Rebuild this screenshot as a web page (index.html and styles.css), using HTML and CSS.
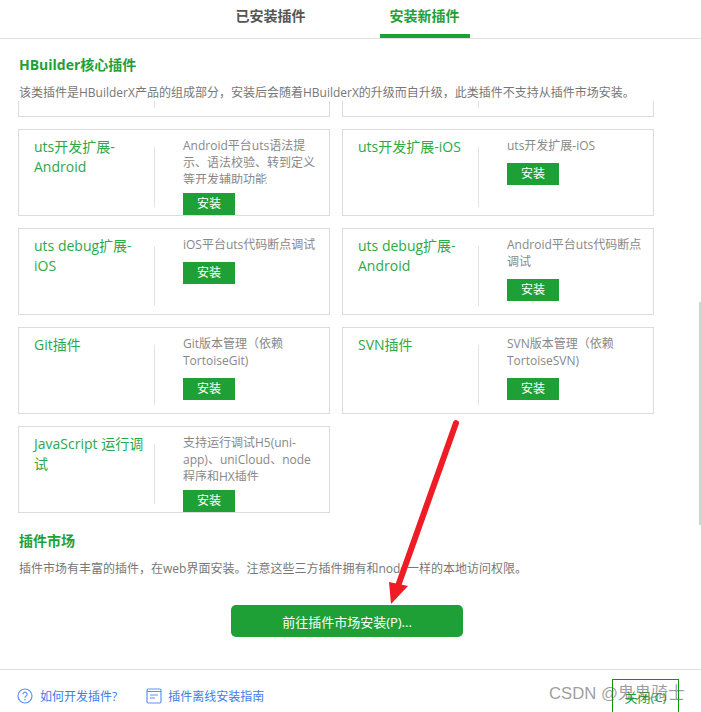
FILE: index.html
```html
<!DOCTYPE html>
<html lang="zh">
<head>
<meta charset="utf-8">
<title>插件安装</title>
<link rel="stylesheet" href="styles.css">
</head>
<body>
<div class="app">
  <nav class="tabs">
    <div class="tab">已安装插件</div>
    <div class="tab active">安装新插件</div>
  </nav>
  <main class="content">
    <h2 class="heading">HBuilder核心插件</h2>
    <p class="desc">该类插件是HBuilderX产品的组成部分，安装后会随着HBuilderX的升级而自升级，此类插件不支持从插件市场安装。</p>
    <div class="list">
      <div class="grid">
        <div class="card stub"><div class="rule"></div></div>
        <div class="card stub"><div class="rule"></div></div>
        <div class="card">
          <div class="name">uts开发扩展-Android</div><div class="rule"></div>
          <div class="info"><p>Android平台uts语法提示、语法校验、转到定义等开发辅助功能</p><button class="install">安装</button></div>
        </div>
        <div class="card">
          <div class="name">uts开发扩展-iOS</div><div class="rule"></div>
          <div class="info"><p>uts开发扩展-iOS</p><button class="install">安装</button></div>
        </div>
        <div class="card">
          <div class="name">uts debug扩展-iOS</div><div class="rule"></div>
          <div class="info"><p>iOS平台uts代码断点调试</p><button class="install">安装</button></div>
        </div>
        <div class="card">
          <div class="name">uts debug扩展-Android</div><div class="rule"></div>
          <div class="info"><p>Android平台uts代码断点调试</p><button class="install">安装</button></div>
        </div>
        <div class="card">
          <div class="name">Git插件</div><div class="rule"></div>
          <div class="info"><p>Git版本管理（依赖TortoiseGit)</p><button class="install">安装</button></div>
        </div>
        <div class="card">
          <div class="name">SVN插件</div><div class="rule"></div>
          <div class="info"><p>SVN版本管理（依赖TortoiseSVN)</p><button class="install">安装</button></div>
        </div>
        <div class="card">
          <div class="name">JavaScript 运行调试</div><div class="rule"></div>
          <div class="info"><p>支持运行调试H5(uni-app)、uniCloud、node程序和HX插件</p><button class="install">安装</button></div>
        </div>
      </div>
    </div>
    <h2 class="heading market">插件市场</h2>
    <p class="desc">插件市场有丰富的插件，在web界面安装。注意这些三方插件拥有和node一样的本地访问权限。</p>
    <div class="cta"><button class="go">前往插件市场安装(P)...</button></div>
  </main>
  <footer class="footer">
    <a class="link">
      <svg class="icon" viewBox="0 0 16 16" width="16" height="16"><circle cx="8" cy="8" r="7" fill="none" stroke="#5b93f5" stroke-width="1.2"/><path d="M5.9 6.3a2.1 2.1 0 1 1 3.2 1.8c-.7.4-1.1.8-1.1 1.7" fill="none" stroke="#5b93f5" stroke-width="1.2"/><circle cx="8" cy="11.7" r=".8" fill="#5b93f5"/></svg>
      如何开发插件?
    </a>
    <a class="link second">
      <svg class="icon" viewBox="0 0 16 16" width="16" height="16"><rect x="1" y="1" width="14" height="14" rx="1.5" fill="none" stroke="#5b93f5" stroke-width="1.2"/><path d="M1 3.5h14M4 7h8M4 10h5" fill="none" stroke="#5b93f5" stroke-width="1.2"/></svg>
      插件离线安装指南
    </a>
    <button class="close">关闭(C)</button>
  </footer>
  <div class="scrollbar"></div>
  <svg class="arrow" width="80" height="200" viewBox="0 0 80 200"><path d="M71 9 13 172" stroke="#ee1c25" stroke-width="6" stroke-linecap="round" fill="none"/><path d="M6 190 4 168 23 172Z" fill="#ee1c25"/></svg>
  <div class="watermark">CSDN @鬼鬼骑士</div>
</div>
</body>
</html>
```
FILE: styles.css
```css
* { box-sizing: border-box; }
html, body { margin: 0; height: 100%; background: #fff; }
body { font-family: "Open Sans", "Noto Sans CJK SC", sans-serif; overflow: hidden; }
.app { position: relative; width: 701px; height: 712px; overflow: hidden; display: flex; flex-direction: column; }
.tabs { height: 39px; flex: none; display: flex; justify-content: center; padding-right: 6px; border-bottom: 1px solid #e0e0e0; }
.tab { width: 90px; margin: 0 32px; height: 38px; font-size: 14px; font-weight: 700; line-height: 32px; text-align: center; color: #555; }
.tab.active { color: #1fa037; border-bottom: 4px solid #1fa037; }
.content { flex: 1; padding: 0 18px; min-height: 0; }
.heading { margin: 16px 0 0 1px; font-size: 14px; line-height: 20px; font-weight: 700; color: #1fa037; }
.heading.market { margin-top: 0; }
.desc { margin: 9px 0 0 1px; font-size: 12px; line-height: 18px; color: #777; white-space: nowrap; height: 18px; }
.list { height: 430px; overflow: hidden; margin-top: -1px; }
.grid { display: grid; grid-template-columns: 312px 312px; column-gap: 12px; row-gap: 12px; }
.card { height: 87px; border: 1px solid #dcdcdc; display: flex; overflow: hidden; }
.stub { height: 16px; border-top: 0; }
.name { width: 120px; flex: none; margin-left: 15px; padding-top: 7px; padding-right: 5px; font-size: 14px; line-height: 20px; color: #2da84a; overflow-wrap: anywhere; }
.rule { width: 1px; height: 60px; flex: none; background: #e2e2e2; margin-top: 17px; }
.stub .rule { margin-top: 0; height: 7px; margin-left: 135px; }
.info { margin-left: 28px; width: 138px; height: 85px; padding-top: 7px; display: flex; flex-direction: column; font-size: 12px; color: #888; }
.info p { margin: 0; line-height: 17px; overflow: hidden; min-height: 0; overflow-wrap: anywhere; }
.install { flex: none; display: block; margin-top: 9px; width: 52px; height: 22px; padding: 0; border: 0; background: #1fa037; color: #fff; font: inherit; font-size: 12px; line-height: 22px; }
.cta { display: flex; justify-content: center; margin-top: 27px; margin-left: -7px; }
.go { width: 232px; height: 32px; border: 0; border-radius: 5px; background: #1fa037; color: #fff; font: inherit; font-size: 13px; }
.footer { flex: none; height: 43px; border-top: 1px solid #e0e0e0; display: flex; align-items: center; padding-left: 17px; }
.link { display: flex; align-items: center; gap: 7px; margin-top: 10px; font-size: 12px; color: #3d7bee; }
.second { margin-left: 29px; gap: 6px; }
.icon { flex: none; }
.close { margin-left: auto; margin-right: 22px; width: 67px; height: 34px; margin-top: 10px; padding: 0; border: 1px solid #0c960c; border-bottom: 0; background: #fff; color: #1fa037; font: inherit; font-size: 13px; }
.scrollbar { position: absolute; right: 0; top: 302px; width: 2px; height: 223px; background: #c8dacd; }
.arrow { position: absolute; left: 385px; top: 414px; }
.watermark { position: absolute; left: 549px; top: 683px; font-family: "Liberation Sans", "Noto Sans CJK SC", sans-serif; font-size: 16.7px; line-height: 22px; color: rgba(90,90,90,.6); white-space: nowrap; }
```
